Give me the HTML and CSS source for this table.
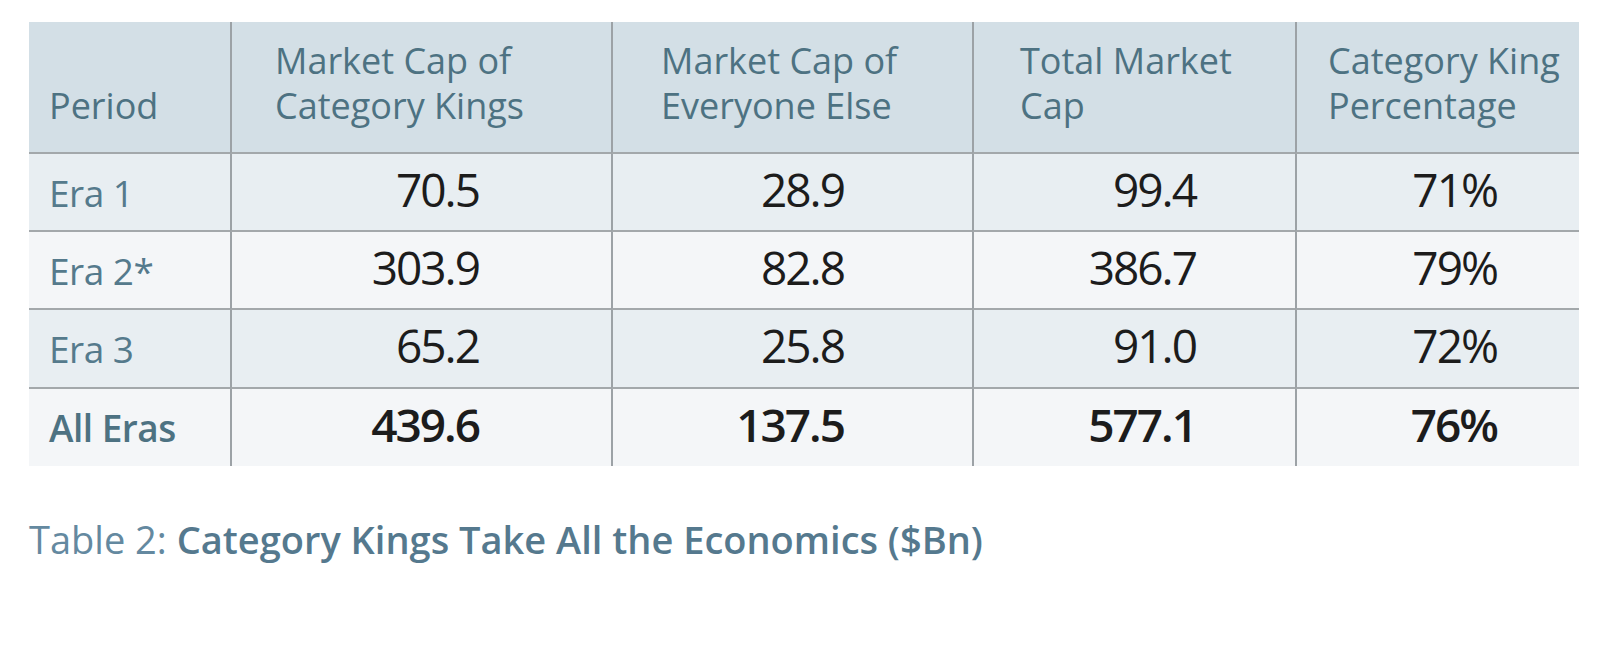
FILE: index.html
```html
<!DOCTYPE html>
<html lang="en">
<head>
<meta charset="utf-8">
<title>Category Kings Take All the Economics</title>
<link rel="stylesheet" href="styles.css">
</head>
<body>
<figure class="figure">
  <table class="data">
    <colgroup>
      <col class="c1"><col class="c2"><col class="c3"><col class="c4"><col class="c5">
    </colgroup>
    <thead>
      <tr class="head">
        <th>Period</th>
        <th>Market Cap of<br>Category Kings</th>
        <th>Market Cap of<br>Everyone Else</th>
        <th>Total Market<br>Cap</th>
        <th>Category King<br>Percentage</th>
      </tr>
    </thead>
    <tbody>
      <tr class="r1">
        <td>Era 1</td><td>70.5</td><td>28.9</td><td>99.4</td><td>71%</td>
      </tr>
      <tr class="r2">
        <td>Era 2*</td><td>303.9</td><td>82.8</td><td>386.7</td><td>79%</td>
      </tr>
      <tr class="r3">
        <td>Era 3</td><td>65.2</td><td>25.8</td><td>91.0</td><td>72%</td>
      </tr>
      <tr class="r4 total">
        <td>All Eras</td><td>439.6</td><td>137.5</td><td>577.1</td><td>76%</td>
      </tr>
    </tbody>
  </table>
  <figcaption class="caption">Table 2: <strong>Category Kings Take All the Economics ($Bn)</strong></figcaption>
</figure>
</body>
</html>
```
FILE: styles.css
```css
html, body {
  margin: 0;
  padding: 0;
  background: #ffffff;
}

body {
  font-family: "Open Sans", "Noto Sans", sans-serif;
}

.figure {
  margin: 0;
  padding: 22px 0 0 29px;
}

.data {
  table-layout: fixed;
  border-collapse: separate;
  border-spacing: 0;
  width: 1550px;
}

.c1 { width: 201px; }
.c2 { width: 381px; }
.c3 { width: 361px; }
.c4 { width: 323px; }
.c5 { width: 284px; }

.data th,
.data td {
  padding: 0;
  border-left: 2px solid #9ca2a6;
  border-bottom: 2px solid #a3a8ab;
}

.data th:first-child,
.data td:first-child {
  border-left: 0;
}

.head {
  height: 132px;
  background: #d3dfe6;
}

.head th {
  vertical-align: bottom;
  text-align: left;
  font-weight: 400;
  font-size: 36px;
  line-height: 45px;
  color: #4d7282;
  padding-bottom: 24px;
}

.head th:nth-child(1) { padding-left: 20px; }
.head th:nth-child(2) { padding-left: 43px; }
.head th:nth-child(3) { padding-left: 48px; }
.head th:nth-child(4) { padding-left: 46px; }
.head th:nth-child(5) { padding-left: 31px; }

.r1, .r3 { background: #e8eef2; }
.r2, .r4 { background: #f4f6f8; }

.r1, .r2 { height: 78px; }
.r3 { height: 79px; }
.r4 { height: 77px; }

.r4 td { border-bottom: 0; }

.data td {
  vertical-align: baseline;
  padding-top: 4px;
  font-size: 46px;
  letter-spacing: -2px;
  line-height: normal;
  color: #1c1c1c;
  text-align: right;
}

.data td:nth-child(1) {
  font-size: 37px;
  letter-spacing: -0.5px;
  color: #557a8c;
  text-align: left;
  padding-left: 20px;
}

.data td:nth-child(2) { padding-right: 132px; }
.data td:nth-child(3) { padding-right: 128px; }
.data td:nth-child(4) { padding-right: 99px; }
.data td:nth-child(5) { padding-right: 82px; }

.total td {
  font-weight: 600;
}

.total td:nth-child(1) {
  color: #4d7282;
}

.caption {
  margin: 0;
  padding-top: 48px;
  font-size: 38px;
  line-height: 50px;
  color: #6489a0;
}

.caption strong {
  font-weight: 600;
  color: #55798e;
}
```
